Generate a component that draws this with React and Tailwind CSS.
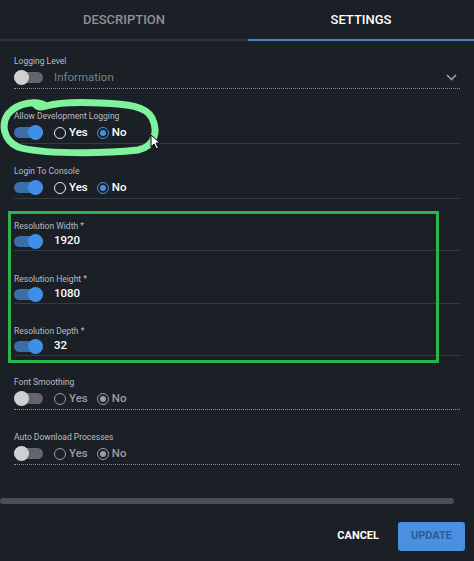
import React from "react";

const Toggle = ({ on, disabled }) => {
  if (disabled) {
    return (
      <div className="relative w-[29px] h-[15px] flex items-center">
        <div className="w-[29px] h-[11px] rounded-full bg-[#62666c]" />
        <div className="absolute left-0 top-0 w-[15px] h-[15px] rounded-full bg-[#cfd0d2]" />
      </div>
    );
  }
  return (
    <div className="relative w-[29px] h-[15px] flex items-center">
      <div className={"w-[29px] h-[11px] rounded-full " + (on ? "bg-[#3a6ea8]" : "bg-[#62666c]")} />
      <div
        className={
          "absolute top-0 w-[15px] h-[15px] rounded-full " +
          (on ? "right-0 bg-[#3f8fe8]" : "left-0 bg-[#cfd0d2]")
        }
      />
    </div>
  );
};

const Radio = ({ checked, disabled, label }) => {
  const ring = disabled ? "border-[#9a9da2]" : checked ? "border-[#4a90e2]" : "border-[#e8e9eb]";
  const dot = disabled ? "bg-[#9a9da2]" : "bg-[#4a90e2]";
  return (
    <div className="flex items-center gap-[3px]">
      <div className={"w-[12px] h-[12px] rounded-full border-[1.5px] flex items-center justify-center " + ring}>
        {checked && <div className={"w-[6px] h-[6px] rounded-full " + dot} />}
      </div>
      <span className={"text-[11.5px] font-medium " + (disabled ? "text-[#9a9da2]" : "text-white")}>{label}</span>
    </div>
  );
};

const Label = ({ children }) => (
  <div className="text-[8.5px] leading-[12px] text-[#b9bdc3]">{children}</div>
);

const YesNoRow = ({ label, disabled, mt }) => (
  <div className={mt}>
    <Label>{label}</Label>
    <div
      className={
        "h-[22px] flex items-center border-b " +
        (disabled ? "border-dotted border-[#8a8e94]" : "border-[#353a41]")
      }
    >
      <Toggle on={!disabled} disabled={disabled} />
      <div className="flex items-center gap-[9px] ml-[11px]">
        <Radio label="Yes" disabled={disabled} />
        <Radio label="No" checked disabled={disabled} />
      </div>
    </div>
  </div>
);

const ValueRow = ({ label, value, mt }) => (
  <div className={mt}>
    <Label>{label}</Label>
    <div className="h-[19px] flex items-center border-b border-[#353a41]">
      <Toggle on />
      <span className="ml-[11px] text-[11.5px] font-medium text-white">{value}</span>
    </div>
  </div>
);

const App = () => {
  return (
    <div
      className="relative w-[474px] h-[561px] overflow-hidden bg-[#1b1f26]"
      style={{ fontFamily: "Roboto, 'Liberation Sans', sans-serif" }}
    >
      {/* tabs */}
      <div className="flex h-[41px]">
        <div className="w-[248px] flex items-center justify-center border-b-2 border-[#30343a] text-[13px] font-medium text-[#8d9198]">
          DESCRIPTION
        </div>
        <div className="flex-1 flex items-center justify-center border-b-2 border-[#4b83c4] text-[13px] font-medium text-white">
          SETTINGS
        </div>
      </div>

      <div className="pl-[14px] pr-[14px] pt-[14px]">
        {/* logging level */}
        <div>
          <Label>Logging Level</Label>
          <div className="h-[22px] flex items-center border-b border-dotted border-[#8a8e94]">
            <Toggle />
            <span className="ml-[11px] text-[11.5px] text-[#7d8188]">Information</span>
            <svg className="ml-auto mr-[3px]" width="11" height="7" viewBox="0 0 11 7">
              <path d="M1 1l4.5 4.5L10 1" stroke="#9a9ea4" strokeWidth="1.6" fill="none" />
            </svg>
          </div>
        </div>

        <YesNoRow label="Allow Development Logging" mt="mt-[21px]" />
        <YesNoRow label="Login To Console" mt="mt-[21px]" />
        <ValueRow label="Resolution Width *" value="1920" mt="mt-[21px]" />
        <ValueRow label="Resolution Height *" value="1080" mt="mt-[22px]" />
        <ValueRow label="Resolution Depth *" value="32" mt="mt-[21px]" />
        <YesNoRow label="Font Smoothing" disabled mt="mt-[20px]" />
        <YesNoRow label="Auto Download Processes" disabled mt="mt-[21px]" />
      </div>

      {/* horizontal scrollbar */}
      <div className="mt-[33px] w-[454px] h-[6px] rounded-full bg-[#4a4f56]" />

      {/* footer */}
      <div className="flex items-center justify-end mt-[18px] pr-[9px] gap-[19px]">
        <button className="text-[11px] font-bold text-white">CANCEL</button>
        <button className="w-[67px] h-[29px] rounded-[3px] bg-[#4a8fe0] text-[11px] font-bold text-[#2a5b96]">
          UPDATE
        </button>
      </div>

      {/* annotation: green rectangle */}
      <div className="absolute left-[8px] top-[211px] w-[431px] h-[152px] border-[3px] border-[#2cb34c]" />

      {/* annotation: highlighter loop */}
      <svg className="absolute left-0 top-[94px]" width="170" height="66" viewBox="0 0 170 66">
        <path
          d="M46 12 C38 6 18 8 8 20 C1 30 3 46 18 53 C40 60 100 60 138 56 C156 52 158 36 152 24 C146 12 128 10 100 9 C80 8 60 8 46 12 C40 14 36 12 34 9"
          stroke="#7ef29c"
          strokeWidth="7"
          fill="none"
          strokeLinecap="round"
        />
      </svg>

      {/* cursor */}
      <svg className="absolute left-[150px] top-[134px]" width="12" height="16" viewBox="0 0 12 16">
        <path d="M1 1 L1 13 L4 10 L6.5 15 L8.5 14 L6 9 L10 9 Z" fill="#fff" stroke="#000" strokeWidth="1" />
      </svg>
    </div>
  );
};

export default App;
